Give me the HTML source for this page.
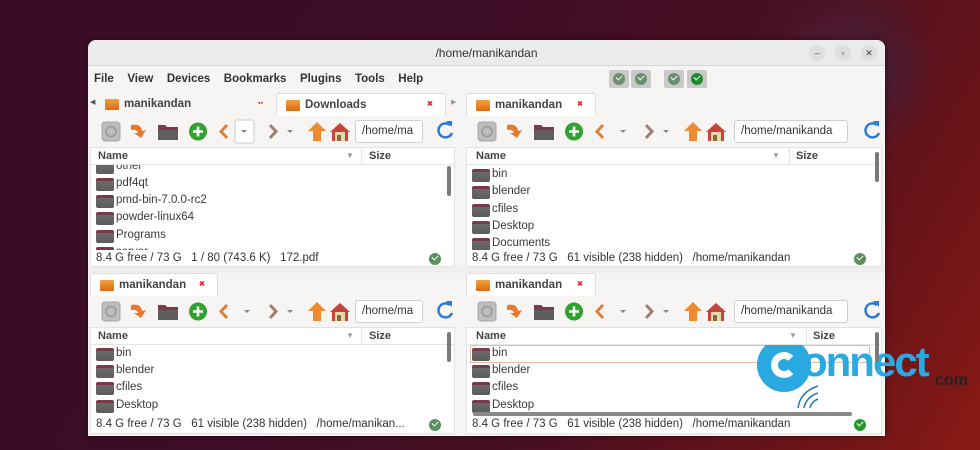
<!DOCTYPE html>
<html><head><meta charset="utf-8">
<style>
*{box-sizing:border-box;margin:0;padding:0}
body{width:980px;height:450px;overflow:hidden;position:relative;font-family:"Liberation Sans",sans-serif;font-size:11px;color:#3a3a3a;
background:radial-gradient(circle at 850px 70px,#5a2a3c 0,#4a1a30 40px,transparent 90px),linear-gradient(120deg,#3a0c28 0%,#3d0d25 40%,#4a0f22 65%,#6a1418 85%,#8a1a14 100%)}
.a{position:absolute}
#win{left:88px;top:40px;width:797px;height:396px;background:#f6f5f4;border-radius:8px 8px 0 0;overflow:hidden;box-shadow:0 0 6px rgba(0,0,0,.5)}
#title{left:0;top:0;width:797px;height:26px;background:#ebebeb;border-bottom:1px solid #d8d8d8;text-align:center;line-height:26px;font-size:12px;color:#333}
.wb{width:16px;height:16px;border-radius:8px;background:#dedede;top:5px;font-size:9px;line-height:16px;text-align:center;color:#444}
#menu{left:6px;top:33px;font-weight:bold;font-size:11.5px;color:#333;word-spacing:0}
#menu span{margin-right:13.5px}
.ck{width:20px;height:18px;background:#c9c9c9;border-radius:2px;top:30px}
.ck i{position:absolute;left:4px;top:3px;width:12px;height:12px;border-radius:6px;background:#6b8f6b}
.pane{position:absolute}
.tab{position:absolute;top:0;height:23px;line-height:22px;font-size:11.5px;font-weight:bold;color:#444;padding-left:28px}
.tab.on{background:#fff;border:1px solid #ddd;border-bottom:none;border-radius:3px 3px 0 0}
.tab .f{position:absolute;left:9px;top:6px;width:14px;height:11px;background:linear-gradient(#f0a040,#e06a10);border-radius:1px}
.tab .x{position:absolute;top:0;font-size:7px;color:#d33;font-weight:bold}
.tb{left:0;top:23px;height:31px;width:100%;background:#f6f5f4}
.lst{left:0;top:54px;width:100%;background:#fff;border:1px solid #e2e2e2;overflow:hidden}
.hdr{left:0;top:0;width:100%;height:17px;line-height:16px;border-bottom:1px solid #e5e5e5;font-weight:bold;color:#444;background:#fff;z-index:2}
.row{position:absolute;left:0;height:17px;line-height:17px;padding-left:25px;font-size:11.5px;color:#3a3a3a;white-space:nowrap}
.row:before{content:"";position:absolute;left:5px;top:3px;width:18px;height:13px;background:linear-gradient(#7a3a4a 0,#7a3a4a 3px,#6a6a6a 3px,#5c5c5c 100%);border-radius:2px}
.st{position:absolute;left:5px;font-size:11.5px;color:#333;white-space:nowrap}
.gc{position:absolute;width:12px;height:12px;border-radius:6px;background:#5b8f5b}
.gc:after,.ck i:after{content:"";position:absolute;left:3px;top:2px;width:5px;height:3px;border-left:1.5px solid #fff;border-bottom:1.5px solid #fff;transform:rotate(-45deg)}
.sb{position:absolute;width:4px;background:#7a7a7a;border-radius:2px;z-index:3}
.path{position:absolute;top:4px;height:23px;background:#fff;border:1px solid #cfcfcf;border-radius:3px;font-size:11.5px;line-height:21px;padding-left:6px;overflow:hidden;white-space:nowrap;color:#333}
</style></head><body>

<div id="win" class="a">
 <div id="title" class="a">/home/manikandan</div>
 <div class="a wb" style="left:721px">–</div>
 <div class="a wb" style="left:747px">▫</div>
 <div class="a wb" style="left:773px">✕</div>
 <div id="menu" class="a"><span>File</span><span>View</span><span>Devices</span><span>Bookmarks</span><span>Plugins</span><span>Tools</span><span>Help</span></div>
 <div class="a ck" style="left:521px"><i></i></div>
 <div class="a ck" style="left:543px"><i></i></div>
 <div class="a ck" style="left:576px"><i></i></div>
 <div class="a ck" style="left:599px"><i style="background:#1f8a2a"></i></div>
 <div class="a" style="left:2px;top:58px;font-size:7px;color:#555">◀</div>
 <div class="a" style="left:363px;top:58px;font-size:7px;color:#999">▶</div>
 <div class="a" style="left:0;top:227px;width:797px;height:6px;background:#f0efee"></div>
</div>

<svg width="0" height="0" style="position:absolute">
 <defs>
  <g id="tool">
   <rect x="12" y="6" width="18" height="19" rx="3" fill="#bdbdbd" stroke="#a8a8a8"/><circle cx="21" cy="15.5" r="5" fill="none" stroke="#999" stroke-width="1.5"/>
   <path d="M41 9 q10 -2 11 6 l4 -1 -5 8 -7 -5 4 0 q-1 -4 -7 -3z" fill="#e8782a"/>
   <path d="M68 9 h7 l2 2 h11 v13 h-20z" fill="#5e5e5e"/><path d="M68 9 h7 l2 2 h11 v3 h-20z" fill="#7b3b4b"/>
   <circle cx="108" cy="15.5" r="9" fill="#2fa22f"/><path d="M103 15.5h10M108 10.5v10" stroke="#fff" stroke-width="2.6"/>
   <path d="M137 9 l-6 6.5 6 6.5" fill="none" stroke="#d9803a" stroke-width="3"/>
   <path d="M154 14 l3 3 3 -3z" fill="#888"/>
   <path d="M180 9 l6 6.5 -6 6.5" fill="none" stroke="#a08070" stroke-width="3"/>
   <path d="M197 14 l3 3 3 -3z" fill="#888"/>
   <path d="M227 6 l9 9 h-5 v10 h-8 v-10 h-5z" fill="#f08a30"/>
   <path d="M240 16 l10 -9 10 9 h-2 v9 h-16 v-9z" fill="#c8443a"/><rect x="245" y="16" width="10" height="9" fill="#e8d8b0"/><rect x="247" y="19" width="4" height="6" fill="#8a6a3a"/>
  </g>
 </defs>
</svg>

<!-- TOP LEFT -->
<div class="pane" style="left:90px;top:93px;width:365px;height:174px">
 <div class="tab" style="left:6px;width:180px">manikandan<span class="x" style="left:162px">▪▪</span><span class="f"></span></div>
 <div class="tab on" style="left:186px;width:170px">Downloads<span class="x" style="left:150px">✖</span><span class="f"></span></div>
 <div class="a tb"><svg class="a" width="365" height="31"><use href="#tool"/><rect x="145" y="4" width="19" height="23" rx="2" fill="#fff" stroke="#ccc"/><path d="M151 14 l3 3 3 -3z" fill="#888"/><path d="M360 9 a7 7 0 1 0 2 8" fill="none" stroke="#2a7ad8" stroke-width="2.5"/><path d="M356 5 l6 0 0 6z" fill="#2a7ad8"/></svg>
  <div class="path" style="left:265px;width:68px">/home/ma</div></div>
 <div class="a lst" style="height:120px">
  <div class="a hdr"><span class="a" style="left:7px">Name</span><span class="a" style="left:255px;color:#999;font-size:8px">▼</span><span class="a" style="left:270px;top:0;height:16px;border-left:1px solid #e5e5e5"></span><span class="a" style="left:278px">Size</span></div>
  <div class="row" style="top:10px">other</div>
  <div class="row" style="top:27px">pdf4qt</div>
  <div class="row" style="top:44px">pmd-bin-7.0.0-rc2</div>
  <div class="row" style="top:61px">powder-linux64</div>
  <div class="row" style="top:79px">Programs</div>
  <div class="row" style="top:96px">server</div>
  <div class="a" style="left:0;top:102px;width:100%;height:18px;background:#fff"></div>
  <div class="sb" style="left:356px;top:18px;height:30px"></div>
  <div class="st" style="top:104px">8.4 G free / 73 G &nbsp; 1 / 80 (743.6 K) &nbsp; 172.pdf</div>
  <div class="gc" style="left:338px;top:105px"></div>
 </div>
</div>

<!-- TOP RIGHT -->
<div class="pane" style="left:466px;top:93px;width:416px;height:174px">
 <div class="tab on" style="left:0;width:130px">manikandan<span class="x" style="left:110px">✖</span><span class="f"></span></div>
 <div class="a tb"><svg class="a" width="416" height="31"><use href="#tool"/><path d="M411 9 a7 7 0 1 0 2 8" fill="none" stroke="#2a7ad8" stroke-width="2.5"/><path d="M407 5 l6 0 0 6z" fill="#2a7ad8"/></svg>
  <div class="path" style="left:268px;width:114px">/home/manikanda</div></div>
 <div class="a lst" style="height:120px">
  <div class="a hdr"><span class="a" style="left:9px">Name</span><span class="a" style="left:305px;color:#999;font-size:8px">▼</span><span class="a" style="left:322px;top:0;height:16px;border-left:1px solid #e5e5e5"></span><span class="a" style="left:329px">Size</span></div>
  <div class="row" style="top:18px">bin</div>
  <div class="row" style="top:35px">blender</div>
  <div class="row" style="top:53px">cfiles</div>
  <div class="row" style="top:70px">Desktop</div>
  <div class="row" style="top:87px">Documents</div>
  <div class="a" style="left:0;top:102px;width:100%;height:18px;background:#fff"></div>
  <div class="sb" style="left:408px;top:4px;height:30px"></div>
  <div class="st" style="top:104px">8.4 G free / 73 G &nbsp; 61 visible (238 hidden) &nbsp; /home/manikandan</div>
  <div class="gc" style="left:387px;top:105px"></div>
 </div>
</div>

<!-- BOTTOM LEFT -->
<div class="pane" style="left:90px;top:273px;width:365px;height:161px">
 <div class="tab on" style="left:0;width:128px">manikandan<span class="x" style="left:108px">✖</span><span class="f"></span></div>
 <div class="a tb"><svg class="a" width="365" height="31"><use href="#tool"/><path d="M360 9 a7 7 0 1 0 2 8" fill="none" stroke="#2a7ad8" stroke-width="2.5"/><path d="M356 5 l6 0 0 6z" fill="#2a7ad8"/></svg>
  <div class="path" style="left:265px;width:68px">/home/ma</div></div>
 <div class="a lst" style="height:107px">
  <div class="a hdr"><span class="a" style="left:7px">Name</span><span class="a" style="left:255px;color:#999;font-size:8px">▼</span><span class="a" style="left:270px;top:0;height:16px;border-left:1px solid #e5e5e5"></span><span class="a" style="left:278px">Size</span></div>
  <div class="row" style="top:17px">bin</div>
  <div class="row" style="top:34px">blender</div>
  <div class="row" style="top:51px">cfiles</div>
  <div class="row" style="top:69px">Desktop</div>
  <div class="row" style="top:86px"></div>
  <div class="a" style="left:0;top:89px;width:100%;height:18px;background:#fff"></div>
  <div class="sb" style="left:356px;top:4px;height:30px"></div>
  <div class="st" style="top:90px">8.4 G free / 73 G &nbsp; 61 visible (238 hidden) &nbsp; /home/manikan...</div>
  <div class="gc" style="left:338px;top:91px"></div>
 </div>
</div>

<!-- BOTTOM RIGHT -->
<div class="pane" style="left:466px;top:273px;width:416px;height:161px">
 <div class="tab on" style="left:0;width:130px">manikandan<span class="x" style="left:110px">✖</span><span class="f"></span></div>
 <div class="a tb"><svg class="a" width="416" height="31"><use href="#tool"/><path d="M411 9 a7 7 0 1 0 2 8" fill="none" stroke="#2a7ad8" stroke-width="2.5"/><path d="M407 5 l6 0 0 6z" fill="#2a7ad8"/></svg>
  <div class="path" style="left:268px;width:114px">/home/manikanda</div></div>
 <div class="a lst" style="height:107px">
  <div class="a hdr"><span class="a" style="left:9px">Name</span><span class="a" style="left:322px;color:#999;font-size:8px">▼</span><span class="a" style="left:339px;top:0;height:16px;border-left:1px solid #e5e5e5"></span><span class="a" style="left:346px">Size</span></div>
  <div class="a" style="left:3px;top:17px;width:400px;height:18px;border:1px solid #e8b8a8"></div>
  <div class="row" style="top:17px">bin</div>
  <div class="row" style="top:34px">blender</div>
  <div class="row" style="top:51px">cfiles</div>
  <div class="row" style="top:69px">Desktop</div>
  <div class="a" style="left:6px;top:84px;width:379px;height:4px;background:#888;border-radius:2px"></div>
  <div class="sb" style="left:408px;top:4px;height:30px"></div>
  <div class="st" style="top:90px">8.4 G free / 73 G &nbsp; 61 visible (238 hidden) &nbsp; /home/manikandan</div>
  <div class="gc" style="left:387px;top:91px;background:#1f9a2a"></div>
 </div>
</div>

<!-- watermark logo -->
<div class="a" style="left:757px;top:338px;width:54px;height:54px;border-radius:27px;background:#2aa8e0"></div>
<div class="a" style="left:771px;top:352px;width:26px;height:26px;border-radius:13px;border:7px solid #fff;border-right-color:transparent"></div>
<div class="a" style="left:802px;top:338px;font-size:42px;font-weight:bold;color:#2aa8e0;letter-spacing:-2px;font-family:'Liberation Sans',sans-serif">onnect</div>
<div class="a" style="left:935px;top:372px;font-size:16px;font-weight:bold;color:#222">com</div>
<svg class="a" style="left:795px;top:380px" width="40" height="30"><path d="M3 28 q2 -16 20 -22 M9 28 q2 -11 14 -15 M15 28 q1 -6 8 -9" fill="none" stroke="#2a7ab0" stroke-width="1.5"/></svg>
</body></html>
